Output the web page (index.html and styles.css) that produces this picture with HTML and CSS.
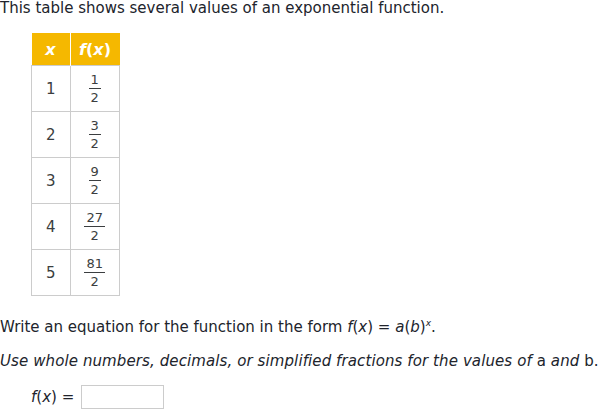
FILE: index.html
```html
<!DOCTYPE html>
<html>
<head>
<meta charset="utf-8">
<link rel="stylesheet" href="styles.css">
</head>
<body>
<div class="page">
  <p class="intro">This table shows several values of an exponential function.</p>
  <table class="tbl">
    <thead>
      <tr><th class="c1"><i>x</i></th><th class="c2"><i>f</i>(<i>x</i>)</th></tr>
    </thead>
    <tbody>
      <tr><td>1</td><td><span class="frac"><span class="num">1</span><span class="den">2</span></span></td></tr>
      <tr><td>2</td><td><span class="frac"><span class="num">3</span><span class="den">2</span></span></td></tr>
      <tr><td>3</td><td><span class="frac"><span class="num">9</span><span class="den">2</span></span></td></tr>
      <tr><td>4</td><td><span class="frac"><span class="num">27</span><span class="den">2</span></span></td></tr>
      <tr><td>5</td><td><span class="frac"><span class="num">81</span><span class="den">2</span></span></td></tr>
    </tbody>
  </table>
  <p class="q">Write an equation for the function in the form <i>f</i>(<i>x</i>) = <i>a</i>(<i>b</i>)<sup><i>x</i></sup>.</p>
  <p class="hint"><i>Use whole numbers, decimals, or simplified fractions for the values of</i> a <i>and</i> b.</p>
  <div class="answer"><span class="lbl"><i>f</i>(<i>x</i>) =</span><span class="box"></span></div>
</div>
</body>
</html>
```
FILE: styles.css
```css
html, body { margin: 0; padding: 0; background: #fff; }
.page {
  font-family: "DejaVu Sans", Verdana, sans-serif;
  font-size: 15px;
  color: #21242c;
  display: flex;
  flex-direction: column;
  align-items: flex-start;
}
.page i { font-style: oblique; }
.intro { margin: 0; line-height: 16px; }
.tbl {
  margin: 17px 0 0 31px;
  border-collapse: collapse;
  color: #3b3e40;
}
.tbl th {
  background: #f5b800;
  color: #fff;
  font-weight: bold;
  height: 32px;
  padding: 0;
  font-size: 16px;
  border-left: 1px solid #fff;
}
.tbl th:first-child { border-left: none; }
.tbl th.c1 { width: 38px; }
.tbl th.c2 { width: 49px; }
.tbl td {
  border: 1px solid #ccc;
  height: 45px;
  padding: 0;
  text-align: center;
  vertical-align: middle;
  font-size: 15px;
}
.frac {
  display: inline-flex;
  flex-direction: column;
  align-items: center;
  vertical-align: middle;
  font-size: 13px;
  line-height: 14px;
}
.frac .num { border-bottom: 1px solid #3b3e40; padding: 0 2px 1px; }
.frac .den { padding-top: 2px; }
.q { margin: 23px 0 0 0; line-height: 16px; }
.q sup { font-size: 9px; vertical-align: 6px; line-height: 0; }
.hint { margin: 18px 0 0 0; line-height: 16px; letter-spacing: 0.1px; }
.answer {
  margin: 16px 0 0 31px;
  display: flex;
  align-items: center;
  gap: 7px;
}
.box {
  width: 81px;
  height: 22px;
  border: 1px solid #ccc;
  background: #fff;
}
```
